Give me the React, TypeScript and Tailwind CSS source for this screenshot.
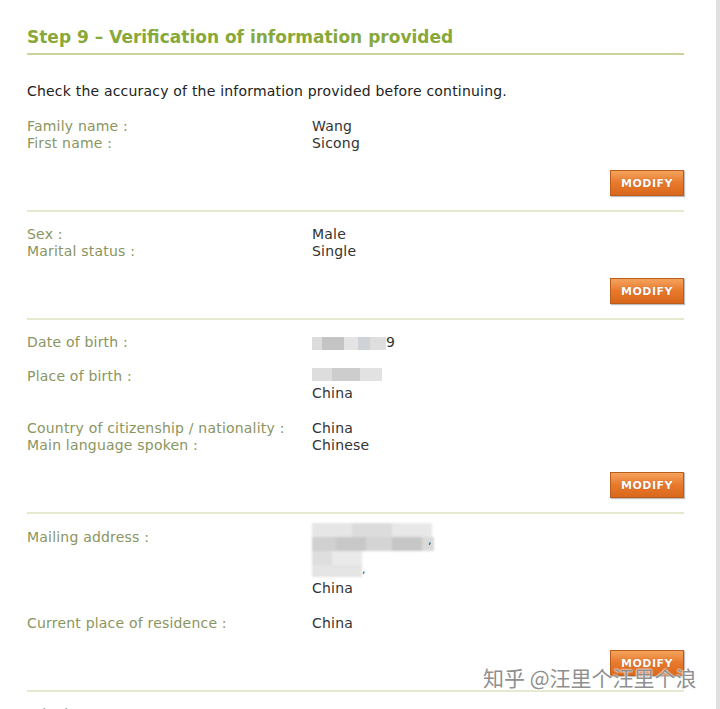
import React from 'react';

const font = { fontFamily: '"DejaVu Sans", Verdana, sans-serif' };

function ModifyButton() {
  return (
    <div className="flex justify-end">
      <button className="w-[74px] h-[26px] border border-[#b85d1e] bg-gradient-to-b from-[#f4a35c] via-[#e8782a] to-[#d9681c] text-white text-[11px] font-bold tracking-[0.5px] shadow-[1px_1px_1px_rgba(0,0,0,0.25)] [text-shadow:0_0_1px_rgba(120,50,0,0.6)]">
        MODIFY
      </button>
    </div>
  );
}

function Blur({ blocks }: { blocks: { w: number; c: string }[] }) {
  return (
    <span className="inline-flex h-[13px] align-middle blur-[0.6px]">
      {blocks.map((b, i) => (
        <span key={i} style={{ width: b.w, background: b.c }} className="h-full" />
      ))}
    </span>
  );
}

function Row({ label, children, className = '' }: { label: string; children: React.ReactNode; className?: string }) {
  return (
    <div className={`grid grid-cols-[285px_1fr] ${className}`}>
      <div className="text-[#8a955f]">{label}</div>
      <div className="text-[#333]">{children}</div>
    </div>
  );
}

function Section({ children, top = 14 }: { children: React.ReactNode; top?: number }) {
  return (
    <div className="border-b-2 border-[#e6e9cf] pb-[14px]">
      <div className={top === 15 ? 'pt-[15px]' : 'pt-[14px]'}>{children}</div>
      <div className="mt-[18px]">
        <ModifyButton />
      </div>
    </div>
  );
}

export default function App() {
  return (
    <div className="relative flex min-h-screen bg-white" style={font}>
      <div className="w-[716px] pl-[27px] pr-[32px] pt-[26px] text-[14px] leading-[17px] tracking-[0.2px]">
        <h1 className="text-[17px] leading-[22px] font-bold tracking-normal text-[#88a83a] pb-[5px] border-b-2 border-[#c9d39a]">
          Step 9 – Verification of information provided
        </h1>
        <p className="mt-[28px] text-[#222]">Check the accuracy of the information provided before continuing.</p>

        <div className="border-b-2 border-[#e6e9cf] pb-[14px] pt-[18px]">
          <Row label="Family name :">Wang</Row>
          <Row label="First name :">Sicong</Row>
          <div className="mt-[18px]">
            <ModifyButton />
          </div>
        </div>

        <Section>
          <Row label="Sex :">Male</Row>
          <Row label="Marital status :">Single</Row>
        </Section>

        <Section>
          <Row label="Date of birth :">
            <Blur
              blocks={[
                { w: 10, c: '#dcdcdc' },
                { w: 22, c: '#c4c4c4' },
                { w: 14, c: '#e4e4e4' },
                { w: 12, c: '#cfd3d8' },
                { w: 16, c: '#dedede' },
              ]}
            />
            9
          </Row>
          <Row label="Place of birth :" className="mt-[17px]">
            <div className="h-[17px] flex items-start">
              <Blur
                blocks={[
                  { w: 20, c: '#dddddd' },
                  { w: 28, c: '#cdcdcd' },
                  { w: 22, c: '#e2e2e2' },
                ]}
              />
            </div>
            <div>China</div>
          </Row>
          <Row label="Country of citizenship / nationality :" className="mt-[18px]">China</Row>
          <Row label="Main language spoken :">Chinese</Row>
        </Section>

        <Section top={15}>
          <Row label="Mailing address :">
            <div className="relative h-[51px]">
              <div className="absolute left-0 top-[-6px] flex flex-col blur-[0.8px]">
                <div className="flex h-[14px]">
                  <span className="w-[40px] bg-[#e6e6e6]" />
                  <span className="w-[40px] bg-[#dcdcdc]" />
                  <span className="w-[40px] bg-[#e8e8e8]" />
                </div>
                <div className="flex h-[14px]">
                  <span className="w-[24px] bg-[#d0d0d0]" />
                  <span className="w-[30px] bg-[#c8c8c8]" />
                  <span className="w-[26px] bg-[#d4d4d4]" />
                  <span className="w-[30px] bg-[#c6c6c6]" />
                  <span className="w-[12px] bg-[#dadada]" />
                </div>
                <div className="flex h-[14px]">
                  <span className="w-[20px] bg-[#dedede]" />
                  <span className="w-[30px] bg-[#eaeaea]" />
                </div>
                <div className="flex h-[12px]">
                  <span className="w-[50px] bg-[#e4e4e4]" />
                </div>
              </div>
              <span className="absolute left-[116px] top-[3px] text-[11px]">,</span>
              <span className="absolute left-[50px] top-[32px] text-[11px]">,</span>
            </div>
            <div>China</div>
          </Row>
          <Row label="Current place of residence :" className="mt-[18px]">China</Row>
        </Section>

        <div className="pt-[14px]">
          <Row label="Telephone :">&nbsp;</Row>
        </div>
      </div>
      <div className="w-[4px] bg-[#e0e0e0]" />

      <div
        className="absolute left-[483px] top-[664px] text-[21px] leading-[26px] text-[#8f8f8f] [text-shadow:0_0_2px_#fff,0_0_2px_#fff]"
        style={{ fontFamily: '"Noto Sans CJK SC", sans-serif' }}
      >
        知乎 @汪里个汪里个浪
      </div>
    </div>
  );
}
